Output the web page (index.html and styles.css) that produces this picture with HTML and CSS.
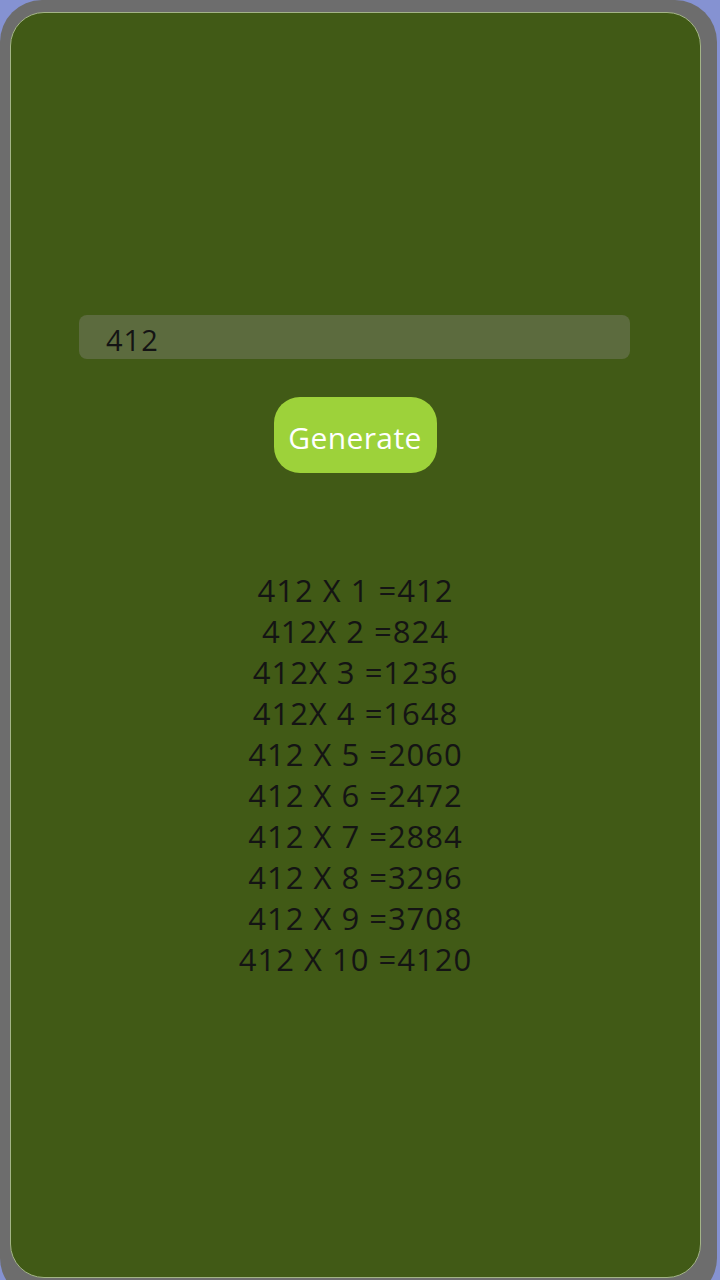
FILE: index.html
```html
<!DOCTYPE html>
<html>
<head>
<meta charset="utf-8">
<link rel="stylesheet" href="styles.css">
</head>
<body>
<div class="frame">
  <div class="panel">
    <div class="field"><span class="field-text">412</span></div>
    <button class="btn">Generate</button>
    <div class="table">
      <div class="row">412 X 1 =412</div>
      <div class="row">412X 2 =824</div>
      <div class="row">412X 3 =1236</div>
      <div class="row">412X 4 =1648</div>
      <div class="row">412 X 5 =2060</div>
      <div class="row">412 X 6 =2472</div>
      <div class="row">412 X 7 =2884</div>
      <div class="row">412 X 8 =3296</div>
      <div class="row">412 X 9 =3708</div>
      <div class="row">412 X 10 =4120</div>
    </div>
  </div>
</div>
</body>
</html>
```
FILE: styles.css
```css
html, body {
  margin: 0;
  padding: 0;
  height: 1280px;
  overflow: hidden;
  background: #8592d2;
  font-family: "Open Sans", "Noto Sans", sans-serif;
}
.frame {
  width: 717px;
  height: 1300px;
  box-sizing: border-box;
  background: #6d6d6d;
  border-radius: 42px;
  padding: 12px 16px 0 10px;
}
.panel {
  height: 1266px;
  box-sizing: border-box;
  background: #415a16;
  border: 1px solid #a3b487;
  border-radius: 34px;
  display: flex;
  flex-direction: column;
  align-items: center;
  padding-top: 302px;
}
.field {
  width: 551px;
  height: 44px;
  box-sizing: border-box;
  background: #5c6b3e;
  border-radius: 8px;
  padding-left: 27px;
  padding-top: 5px;
  display: flex;
  align-items: center;
  margin-left: -2px;
}
.field-text {
  font-size: 29px;
  color: #141414;
  letter-spacing: 1px;
}
.btn {
  margin-top: 38px;
  width: 163px;
  height: 76px;
  border: none;
  border-radius: 26px;
  background: #9dd23a;
  color: #ffffff;
  font-family: "Open Sans", "Noto Sans", sans-serif;
  font-size: 30px;
  letter-spacing: 0.4px;
  padding: 4px 0 0 0;
  margin-left: -1px;
}
.table {
  margin-top: 97px;
  display: flex;
  flex-direction: column;
  align-items: center;
}
.row {
  font-size: 31px;
  line-height: 41px;
  color: #141414;
  letter-spacing: 1px;
  white-space: nowrap;
}
```
